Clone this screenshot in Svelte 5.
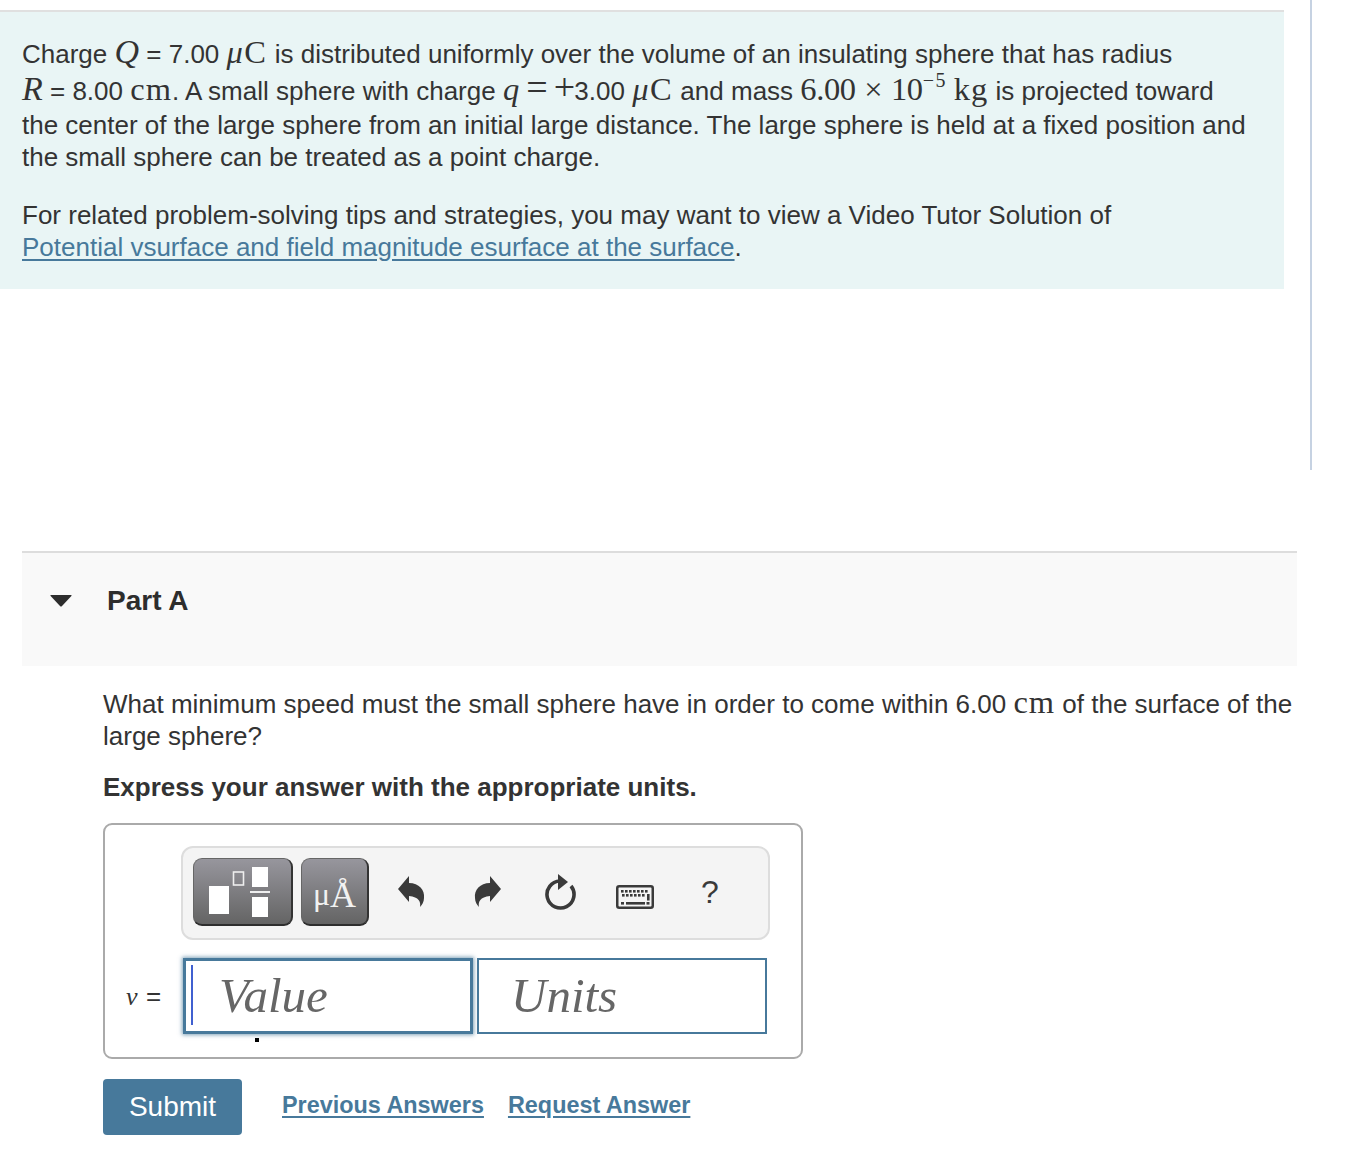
<script>
  const keyRows = [
    [5, 9, 13, 17, 21, 25, 29],
    [5, 9, 13, 17, 21, 25],
  ];
</script>

<div class="page">
  <main class="main">
    <section class="intro">
      <p class="statement">
        Charge <span class="math big"><i>Q</i></span> = 7.00 <span class="math mu"><i>μ</i>C</span> is distributed uniformly over the volume of an insulating sphere that has radius<br />
        <span class="math big"><i>R</i></span> = 8.00 <span class="math unit">cm</span>. A small sphere with charge <span class="math"><i>q</i> <span class="op">=</span> <span class="op">+</span> </span>3.00 <span class="math mu"><i>μ</i>C</span> and mass <span class="math tall">6.00 <span class="times">×</span> 10<sup>−5</sup> <span class="unit">kg</span></span> is projected toward<br />
        the center of the large sphere from an initial large distance. The large sphere is held at a fixed position and<br />
        the small sphere can be treated as a point charge.
      </p>
      <p class="tips">
        For related problem-solving tips and strategies, you may want to view a Video Tutor Solution of<br />
        <a href="#video">Potential vsurface and field magnitude esurface at the surface</a>.
      </p>
    </section>

    <section class="part">
      <header class="part-head">
        <svg class="caret" width="22" height="13" viewBox="0 0 22 13"><path d="M1 1h20q1 0 .4 1L12 12q-1 1-2 0L.6 2Q0 1 1 1z" fill="#2d2d2d" /></svg>
        <h2>Part A</h2>
      </header>

      <div class="part-body">
        <p class="question">
          What minimum speed must the small sphere have in order to come within 6.00 <span class="math unit">cm</span> of the surface of the<br />
          large sphere?
        </p>
        <p class="hint">Express your answer with the appropriate units.</p>

        <div class="answer">
          <div class="toolbar">
            <button class="tpl tpl-wide" aria-label="templates">
              <svg width="68" height="52" viewBox="0 0 68 52">
                <rect x="0" y="20" width="20" height="28" fill="#fff" />
                <rect x="24.5" y="6" width="10" height="13" fill="none" stroke="#eee" stroke-width="1.6" />
                <rect x="43" y="1" width="16" height="20" fill="#fff" />
                <rect x="41" y="25" width="20" height="2" fill="#eee" />
                <rect x="43" y="31" width="16" height="20" fill="#fff" />
              </svg>
            </button>
            <button class="tpl tpl-unit"><span class="micro">μ</span>Å</button>

            <svg class="tool undo" width="28" height="32" viewBox="0 0 28 32"><path d="M1 14 12 1v7c10 0 16 7 15 15 0 4-2 7-4 9 1-5-1-10-11-11v6z" fill="#3a3a3a" /></svg>
            <svg class="tool redo" width="28" height="32" viewBox="0 0 28 32"><path d="M27 14 16 1v7C6 8 0 15 1 23c0 4 2 7 4 9-1-5 1-10 11-11v6z" fill="#3a3a3a" /></svg>
            <svg class="tool reset" width="34" height="38" viewBox="0 0 34 38">
              <path d="M16 8A13.500 13.500 0 1 0 27 13" fill="none" stroke="#3a3a3a" stroke-width="3.600" />
              <path d="M14 1l10 8-10 8z" fill="#3a3a3a" />
            </svg>
            <svg class="tool keys" width="38" height="24" viewBox="0 0 38 24">
              <rect x="1.250" y="1.250" width="35.500" height="21.500" rx="2" fill="none" stroke="#3a3a3a" stroke-width="2.500" />
              {#each keyRows as row, r}
                {#each row as x}
                  <rect x={x + r} y={5 + r * 4} width="2.600" height="2.600" fill="#3a3a3a" />
                {/each}
              {/each}
              <rect x="31" y="9" width="2.600" height="6.500" fill="#3a3a3a" />
              <rect x="5" y="17" width="3" height="2.600" fill="#3a3a3a" />
              <rect x="10" y="17" width="19" height="2.600" fill="#3a3a3a" />
              <rect x="30.500" y="17" width="3" height="2.600" fill="#3a3a3a" />
            </svg>
            <span class="help">?</span>
          </div>

          <div class="inputs">
            <span class="var"><i>v</i> <span class="var-eq">=</span></span>
            <div class="field focused">
              <span class="cursor"></span>
              <span class="placeholder">Value</span>
              <span class="dot"></span>
            </div>
            <div class="field">
              <span class="placeholder">Units</span>
            </div>
          </div>
        </div>

        <div class="actions">
          <button class="submit">Submit</button>
          <a class="action-link" href="#previous">Previous Answers</a>
          <a class="action-link" href="#request">Request Answer</a>
        </div>
      </div>
    </section>
  </main>
  <div class="rail"></div>
</div>

<style>
  :global(body) { margin: 0; background: #fff; }
  .page {
    display: flex; align-items: flex-start; width: 1348px; height: 1154px; overflow: hidden;
    font-family: "Liberation Sans", Arial, sans-serif; font-size: 26px; line-height: 32px; color: #333;
  }
  .main { width: 1310px; flex: none; }
  .rail { width: 2px; height: 470px; background: #c6d2e2; }
  p { margin: 0; }

  .intro {
    width: 1284px; height: 279px; box-sizing: border-box; margin-top: 10px; padding: 25px 0 0 22px;
    background: #e9f5f5; border-top: 2px solid #e0e0e0;
  }
  .tips { margin-top: 26px; }
  a { color: #47799b; }
  .tips a { text-underline-offset: 3px; }

  .math { font-family: "Liberation Serif", "Times New Roman", serif; font-size: 32.5px; line-height: 30px; }
  .math.big { font-size: 34px; }
  .math.tall { line-height: 39px; letter-spacing: -.4px; }
  .mu { letter-spacing: 1.500px; }
  .unit { letter-spacing: 1px; }
  .op { font-size: 38px; line-height: 0; margin: 0 -1px; }
  .times { margin: 0 1px; }
  sup { font-size: 20px; line-height: 0; vertical-align: 13px; letter-spacing: 1.500px; margin-right: -1px; }

  .part { margin: 262px 0 0 22px; width: 1275px; }
  .part-head {
    display: flex; align-items: flex-start; height: 115px; padding: 32px 0 0 28px; box-sizing: border-box;
    background: #f9f9f9; border-top: 2px solid #ddd;
  }
  .caret { margin-top: 9px; }
  h2 { margin: 0 0 0 35px; font-size: 28px; line-height: 32px; color: #2d2d2d; }

  .part-body { padding: 21px 0 0 81px; }
  .hint { margin-top: 19px; font-weight: 700; }

  .answer {
    width: 700px; height: 236px; box-sizing: border-box; margin-top: 20px; padding: 21px 0 0 76px;
    border: 2px solid #aaa; border-radius: 9px;
  }
  .toolbar {
    display: flex; align-items: flex-start; width: 589px; height: 94px; box-sizing: border-box; padding: 10px 0 0 10px;
    background: #f4f4f4; border: 2px solid #ddd; border-radius: 12px;
  }
  .tpl {
    display: flex; align-items: center; justify-content: center; height: 68px; box-sizing: border-box; padding: 0;
    background: linear-gradient(#97969d, #646464); border: 1px solid #666; border-bottom: 2px solid #2e2e2e;
    border-right: 2px solid #333; border-radius: 9px; color: #f2f2f2;
  }
  .tpl-wide { width: 100px; }
  .tpl-unit { width: 68px; margin-left: 8px; font-family: "Liberation Serif", serif; font-size: 36px; padding-top: 6px; }
  .micro { font-size: 32px; }
  .tool { flex: none; }
  .undo { margin: 17px 0 0 28px; }
  .redo { margin: 17px 0 0 49px; }
  .reset { margin: 15px 0 0 42px; }
  .keys { margin: 27px 0 0 38px; }
  .help { margin: 14px 0 0 47px; font-size: 32px; line-height: 40px; color: #3a3a3a; }

  .inputs { display: flex; align-items: center; gap: 4px; margin: 18px 0 0 -76px; }
  .var { width: 76px; margin-right: -2px; box-sizing: border-box; padding-left: 21px; font-family: "Liberation Serif", serif; font-size: 26px; color: #333; white-space: nowrap; }
  .var-eq { font-family: "Liberation Sans", sans-serif; margin-left: 2px; }
  .field {
    position: relative; display: flex; align-items: center; width: 290px; height: 76px; box-sizing: border-box;
    padding-left: 32px; border: 2px solid #47799b; background: #fff;
  }
  .field.focused { padding-left: 33px; border-width: 3px; box-shadow: 0 0 4px 1px #47799bb0; }
  .placeholder { font-family: "Liberation Serif", serif; font-style: italic; font-size: 49px; line-height: 60px; color: #666; }
  .cursor { position: absolute; left: 5px; top: 4px; width: 2px; height: 60px; background: #4060d0; }
  .dot { position: absolute; left: 69px; top: 77px; width: 4px; height: 4px; background: #000; }

  .actions { display: flex; align-items: center; margin-top: 20px; }
  .submit {
    width: 139px; height: 56px; padding: 0; background: #47799b; color: #fff; border: none; border-radius: 4px;
    font-family: inherit; font-size: 28px;
  }
  .action-link { font-size: 23.4px; font-weight: 700; text-underline-offset: 3px; padding-bottom: 4px; }
  .submit + .action-link { margin-left: 40px; }
  .action-link + .action-link { margin-left: 24px; }
</style>
